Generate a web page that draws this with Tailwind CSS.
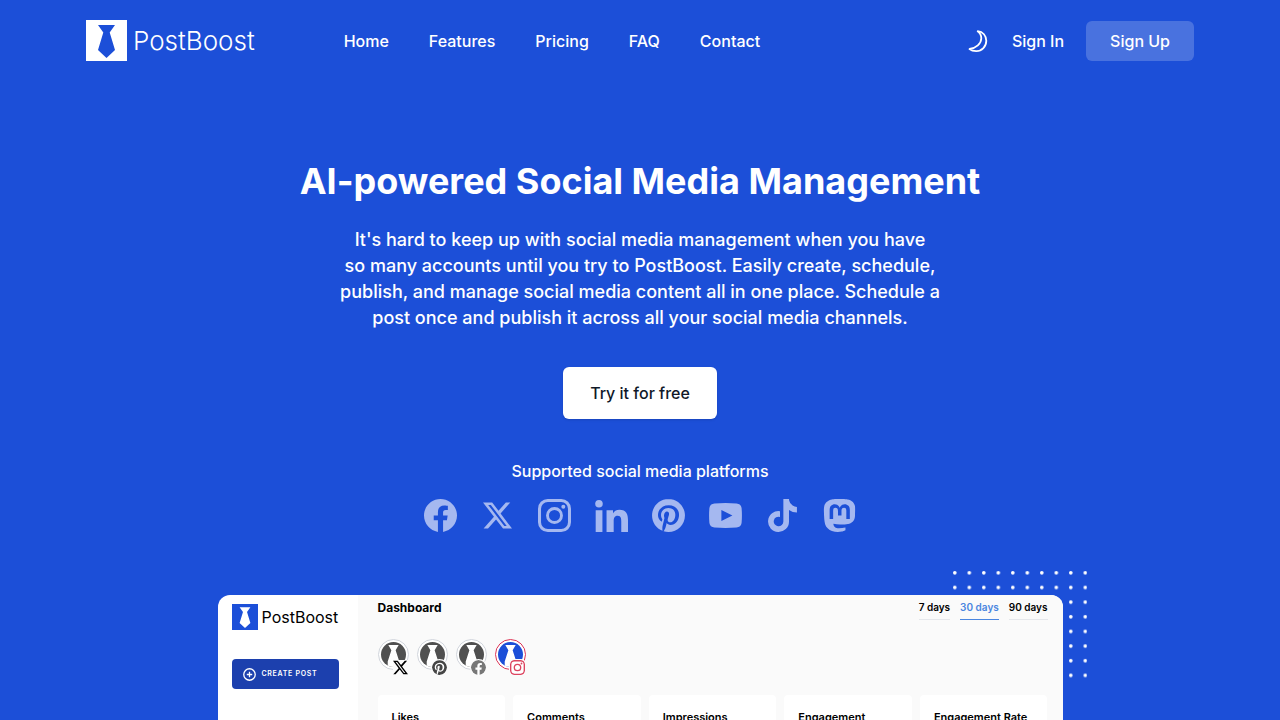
<!DOCTYPE html>
<html lang="en">
<head>
  <meta charset="UTF-8" />
  <meta name="viewport" content="width=device-width, initial-scale=1" />
  <title>PostBoost - AI-powered Social Media Management</title>
  <script src="https://cdn.jsdelivr.net/npm/@tailwindcss/browser@4"></script>
</head>
<body class="bg-[#1c4fd8] font-['Inter',sans-serif] text-white overflow-x-hidden">
  <!-- Shared icon shapes -->
  <svg class="hidden" aria-hidden="true">
    <symbol id="tie" viewBox="0 0 41 41">
      <path d="M12 5h17l-5.300 7.500 5.300 17.500-8.500 8-8.500-8 5.300-17.500z" />
    </symbol>
    <symbol id="avatar-tie" viewBox="0 0 41 41">
      <path d="M12 5h17l-5 8.500L30 32v9H11v-9l6-18.500z" />
    </symbol>
    <symbol id="facebook" viewBox="0 0 24 24">
      <path d="M24 12.073c0-6.627-5.373-12-12-12s-12 5.373-12 12c0 5.990 4.388 10.954 10.125 11.854v-8.385H7.078v-3.470h3.047V9.430c0-3.007 1.792-4.669 4.533-4.669 1.312 0 2.686.235 2.686.235v2.953H15.830c-1.491 0-1.956.925-1.956 1.874v2.250h3.328l-.532 3.470h-2.796v8.385C19.612 23.027 24 18.062 24 12.073z" />
    </symbol>
    <symbol id="x" viewBox="0 0 24 24">
      <path d="M18.901 1.153h3.680l-8.040 9.190L24 22.846h-7.406l-5.800-7.584-6.638 7.584H.474l8.600-9.830L0 1.154h7.594l5.243 6.932ZM17.610 20.644h2.039L6.486 3.240H4.298Z" />
    </symbol>
    <symbol id="instagram" viewBox="0 0 24 24">
      <rect x="1.100" y="1.100" width="21.800" height="21.800" rx="6" fill="none" stroke="currentColor" stroke-width="2.200" />
      <circle cx="12" cy="12" r="5.100" fill="none" stroke="currentColor" stroke-width="2.100" />
      <circle cx="18.400" cy="5.600" r="1.450" />
    </symbol>
    <symbol id="linkedin" viewBox="0 0 24 24">
      <circle cx="2.900" cy="3.400" r="2.750" />
      <path d="M.5 8.200h4.900V24H.5zM8.400 8.200h4.700v2.150h.07c.65-1.240 2.250-2.550 4.640-2.550C22.800 7.800 24 11.100 24 15.350V24h-4.900v-7.700c0-1.830-.04-4.200-2.560-4.200-2.560 0-2.950 2-2.950 4.070V24H8.400z" />
    </symbol>
    <symbol id="pinterest" viewBox="0 0 24 24">
      <path d="M12.017 0C5.396 0 .029 5.367.029 11.987c0 5.079 3.158 9.417 7.618 11.162-.105-.949-.199-2.403.041-3.439.219-.937 1.406-5.957 1.406-5.957s-.359-.72-.359-1.781c0-1.663.967-2.911 2.168-2.911 1.024 0 1.518.769 1.518 1.688 0 1.029-.653 2.567-.992 3.992-.285 1.193.6 2.165 1.775 2.165 2.128 0 3.768-2.245 3.768-5.487 0-2.861-2.063-4.869-5.008-4.869-3.410 0-5.409 2.562-5.409 5.199 0 1.033.394 2.143.889 2.741.099.12.112.225.085.345-.09.375-.293 1.199-.334 1.363-.053.225-.172.271-.401.165-1.495-.69-2.433-2.878-2.433-4.646 0-3.776 2.748-7.252 7.920-7.252 4.158 0 7.392 2.967 7.392 6.923 0 4.135-2.607 7.462-6.233 7.462-1.214 0-2.354-.629-2.758-1.379l-.749 2.848c-.269 1.045-1.004 2.352-1.498 3.146 1.123.345 2.306.535 3.550.535 6.607 0 11.985-5.365 11.985-11.987C23.970 5.390 18.592.026 11.985.026L12.017 0z" />
    </symbol>
    <symbol id="youtube" viewBox="0 0 24 24">
      <path fill-rule="evenodd" d="M4 3.200Q12 2.700 20 3.200Q23.300 3.500 23.700 6.500Q24.200 12 23.700 17.500Q23.300 20.500 20 20.800Q12 21.300 4 20.800Q.7 20.500.3 17.500Q-.2 12 .3 6.500Q.7 3.500 4 3.200ZM9 8v8l8-4z" />
    </symbol>
    <symbol id="tiktok" viewBox="0 0 448 512">
      <path d="M448,209.910a210.060,210.060,0,0,1-122.770-39.250V349.380A162.550,162.550,0,1,1,185,188.310V278.200a74.620,74.620,0,1,0,52.230,71.180V0l88,0a121.180,121.180,0,0,0,1.860,22.170h0A122.180,122.180,0,0,0,381,102.390a121.430,121.430,0,0,0,67,20.140Z" />
    </symbol>
    <symbol id="mastodon" viewBox="0 0 24 24">
      <path d="M23.268 5.313c-.35-2.578-2.617-4.610-5.304-5.004C17.510.242 15.792 0 11.813 0h-.03c-3.980 0-4.835.242-5.288.309C3.882.692 1.496 2.518.917 5.127.64 6.412.61 7.837.661 9.143c.074 1.874.088 3.745.26 5.611.118 1.240.325 2.470.62 3.680.55 2.237 2.777 4.098 4.960 4.857 2.336.792 4.849.923 7.256.38.265-.061.527-.132.786-.213.585-.184 1.270-.39 1.774-.753a.057.057 0 0 0 .023-.043v-1.809a.052.052 0 0 0-.02-.041.053.053 0 0 0-.046-.01 20.282 20.282 0 0 1-4.709.545c-2.730 0-3.463-1.284-3.674-1.818a5.593 5.593 0 0 1-.319-1.433.053.053 0 0 1 .066-.054c1.517.363 3.072.546 4.632.546.376 0 .75 0 1.125-.01 1.570-.044 3.224-.124 4.768-.422.038-.008.077-.015.11-.024 2.435-.464 4.753-1.920 4.989-5.604.008-.145.03-1.520.03-1.670.002-.512.167-3.630-.024-5.545zm-3.748 9.195h-2.561V8.290c0-1.309-.55-1.976-1.670-1.976-1.230 0-1.846.79-1.846 2.350v3.403h-2.546V8.663c0-1.560-.617-2.350-1.848-2.350-1.112 0-1.668.668-1.670 1.977v6.218H4.822V8.102c0-1.310.337-2.350 1.011-3.120.696-.77 1.608-1.164 2.740-1.164 1.311 0 2.302.5 2.962 1.498l.638 1.060.638-1.060c.66-.999 1.650-1.498 2.960-1.498 1.130 0 2.043.395 2.740 1.164.675.77 1.012 1.810 1.012 3.120z" />
    </symbol>
  </svg>

  <header class="mx-auto flex max-w-[1140px] items-center px-4 py-5">
    <a href="#" class="mr-[89px] flex items-center gap-1.5">
      <span class="bg-white"><svg class="size-[41px] fill-[#1c4fd8]"><use href="#tie" /></svg></span>
      <span class="text-[26px] leading-8 font-light">PostBoost</span>
    </a>
    <nav class="flex gap-10 font-medium">
      <a href="#home">Home</a>
      <a href="#features">Features</a>
      <a href="#pricing">Pricing</a>
      <a href="#faq">FAQ</a>
      <a href="#contact">Contact</a>
    </nav>
    <div class="ml-auto flex items-center font-medium">
      <button type="button" aria-label="Dark mode" class="mr-[22px]">
        <svg class="size-6" viewBox="0 0 24 24" fill="none" stroke="currentColor" stroke-width="1.800" stroke-linejoin="round">
          <path d="M11.700 2.200C16.900 2.600 20.300 6.700 20.300 11.800c0 5.800-4.400 10.300-10 10.300-2.800 0-5.200-.7-6.800-2.100C10 19.300 15.300 14.700 15.300 9.200c0-2.600-1.400-5.300-3.600-7z" />
        </svg>
      </button>
      <a href="#signin" class="mr-[22px]">Sign In</a>
      <a href="#signup" class="rounded-md bg-white/20 px-6 py-2">Sign Up</a>
    </div>
  </header>

  <main class="px-4">
    <section id="home" class="flex flex-col items-center pt-[76px] text-center">
      <h1 class="text-4xl leading-[48px] font-bold">AI-powered Social Media Management</h1>
      <p class="mt-[22px] max-w-[604px] text-lg leading-[26px] font-medium">It's hard to keep up with social media management when you have<br /> so many accounts until you try to PostBoost. Easily create, schedule, publish, and manage social media content all in one place. Schedule a post once and publish it across all your social media channels.</p>
      <a href="#signup" class="mt-9 rounded-md bg-white px-[27px] py-3.5 font-medium text-gray-900 shadow-sm">Try it for free</a>
      <p class="mt-10 font-medium">Supported social media platforms</p>
      <ul class="mt-4 flex items-center gap-6 fill-current text-[#a5b8f0]">
        <li><svg class="size-[33px]" role="img" aria-label="Facebook"><use href="#facebook" /></svg></li>
        <li class="px-0.5"><svg class="h-[33px] w-[29px]" role="img" aria-label="X"><use href="#x" /></svg></li>
        <li><svg class="size-[33px]" role="img" aria-label="Instagram"><use href="#instagram" /></svg></li>
        <li><svg class="size-[33px]" role="img" aria-label="LinkedIn"><use href="#linkedin" /></svg></li>
        <li><svg class="size-[33px]" role="img" aria-label="Pinterest"><use href="#pinterest" /></svg></li>
        <li><svg class="size-[33px]" role="img" aria-label="YouTube"><use href="#youtube" /></svg></li>
        <li><svg class="size-[33px]" role="img" aria-label="TikTok"><use href="#tiktok" /></svg></li>
        <li><svg class="size-[33px]" role="img" aria-label="Mastodon"><use href="#mastodon" /></svg></li>
      </ul>
    </section>

    <section class="relative mx-auto mt-[63px] max-w-[845px]">
      <!-- Dotted decoration behind the preview -->
      <svg class="absolute -top-6 -right-6 h-[111px] w-[134px]" viewBox="0 0 134 111" fill="white" aria-hidden="true">
        <pattern id="dots" width="14.500" height="14.650" patternUnits="userSpaceOnUse">
          <circle cx="1.800" cy="1.800" r="1.800" />
        </pattern>
        <rect width="134" height="111" fill="url(#dots)" />
      </svg>

      <div class="relative flex overflow-hidden rounded-t-xl bg-white text-left text-black">
        <aside class="w-[140px] shrink-0 px-3.5 pt-[9px]">
          <div class="flex items-center gap-1">
            <span class="bg-[#1c4fd8]"><svg class="size-[26px] fill-white"><use href="#tie" /></svg></span>
            <span class="text-base font-normal">PostBoost</span>
          </div>
          <button type="button" class="mt-[29px] flex h-[30px] w-[107px] items-center gap-1.5 rounded-sm bg-[#1c40ae] pl-[11px] text-[7px] font-semibold tracking-widest text-white">
            <svg class="size-[13px]" viewBox="0 0 12 12" fill="none" stroke="currentColor" stroke-width="1.200">
              <circle cx="6" cy="6" r="5.300" />
              <path d="M6 3.500v5M3.500 6h5" />
            </svg>
            CREATE POST
          </button>
        </aside>

        <div class="min-w-0 grow bg-[#fafafa] px-5 pr-[15px] pt-1">
          <div class="flex items-start justify-between">
            <h2 class="text-[12px] leading-[18px] font-bold">Dashboard</h2>
            <div class="flex gap-2.5 text-[10px] leading-4 font-semibold">
              <button type="button" class="border-b border-gray-200 pb-1">7 days</button>
              <button type="button" class="border-b border-[#4a86e0] pb-1 text-[#4a86e0]">30 days</button>
              <button type="button" class="border-b border-gray-200 pb-1">90 days</button>
            </div>
          </div>

          <ul class="mt-[19px] flex gap-2">
            <li class="relative size-[31px] rounded-full border border-gray-300 bg-white p-0.5">
              <svg class="size-full rounded-full bg-[#505050] fill-white"><use href="#avatar-tie" /></svg>
              <svg class="absolute right-0 -bottom-1.5 size-[15px] bg-[#fafafa]"><use href="#x" /></svg>
            </li>
            <li class="relative size-[31px] rounded-full border border-gray-300 bg-white p-0.5">
              <svg class="size-full rounded-full bg-[#505050] fill-white"><use href="#avatar-tie" /></svg>
              <svg class="absolute right-0 -bottom-1.5 size-[15px] rounded-full bg-white fill-[#454545] ring-1 ring-[#fafafa]"><use href="#pinterest" /></svg>
            </li>
            <li class="relative size-[31px] rounded-full border border-gray-300 bg-white p-0.5">
              <svg class="size-full rounded-full bg-[#505050] fill-white"><use href="#avatar-tie" /></svg>
              <svg class="absolute right-0 -bottom-1.5 size-[15px] rounded-full bg-white fill-[#777777] ring-1 ring-[#fafafa]"><use href="#facebook" /></svg>
            </li>
            <li class="relative size-[31px] rounded-full border border-[#dc3455] bg-white p-0.5">
              <svg class="size-full rounded-full bg-[#1c4fd8] fill-white"><use href="#avatar-tie" /></svg>
              <svg class="absolute right-0 -bottom-1.5 size-[15px] rounded bg-white fill-current text-[#dc4560] ring-1 ring-[#fafafa]"><use href="#instagram" /></svg>
            </li>
          </ul>

          <div class="mt-[25px] grid grid-cols-5 gap-2 text-[11px] leading-4 font-semibold whitespace-nowrap">
            <h3 class="rounded-sm bg-white px-3.5 pt-3.5 pb-16">Likes</h3>
            <h3 class="rounded-sm bg-white px-3.5 pt-3.5 pb-16">Comments</h3>
            <h3 class="rounded-sm bg-white px-3.5 pt-3.5 pb-16">Impressions</h3>
            <h3 class="rounded-sm bg-white px-3.5 pt-3.5 pb-16">Engagement</h3>
            <h3 class="rounded-sm bg-white px-3.5 pt-3.5 pb-16">Engagement Rate</h3>
          </div>
        </div>
      </div>
    </section>
  </main>
</body>
</html>
